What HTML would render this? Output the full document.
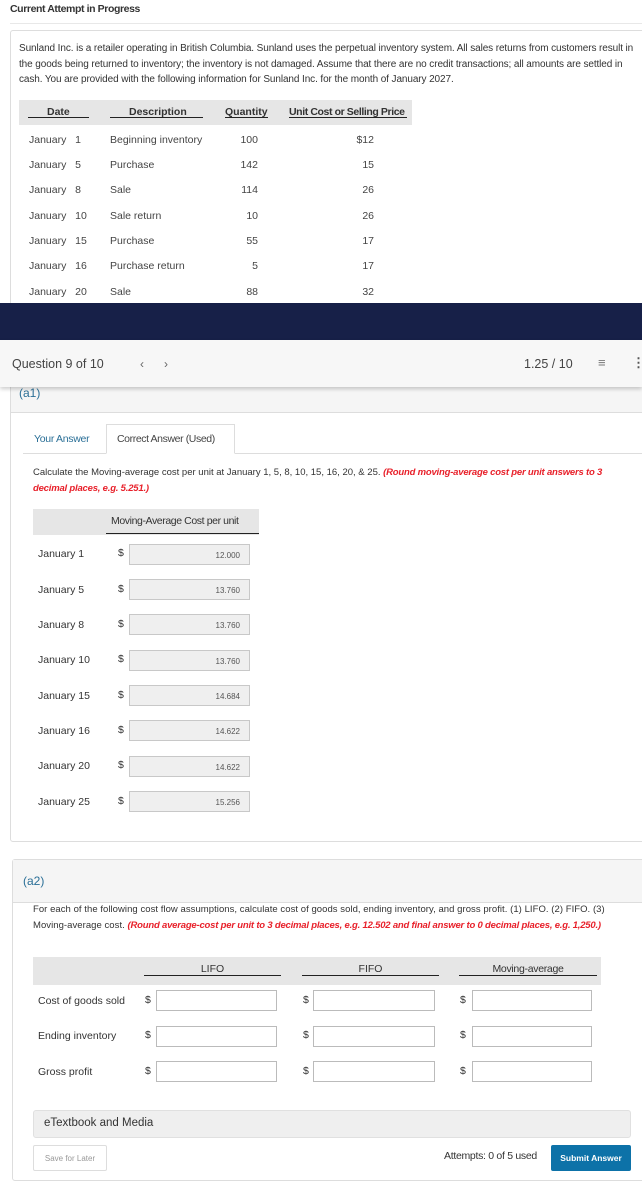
<!DOCTYPE html>
<html><head><meta charset="utf-8"><style>
*{margin:0;padding:0;box-sizing:border-box}
body{width:642px;height:1183px;position:relative;background:#fff;font-family:"Liberation Sans",sans-serif;color:#333;overflow:hidden;font-size:10.5px}
.a{position:absolute;white-space:nowrap}
.card{position:absolute;border:1px solid #ddd;border-radius:3px;background:#fff}
.hd{position:absolute;background:#e6e6e6}
.ul{position:absolute;border-bottom:1.5px solid #222}
.inp{position:absolute;height:21px;border:1px solid #c8c8c8;background:#efefef;font-size:8px;color:#555;text-align:right;padding:6px 9px 0 0}
.inw{position:absolute;height:21px;border:1px solid #bbb;background:#fff}
.red{color:#e8202a;font-style:italic;font-weight:bold;letter-spacing:-0.2px}
</style></head><body>
<div class="a" style="left:10px;top:3px;font-size:10.5px;font-weight:bold;letter-spacing:-0.4px;color:#333">Current Attempt in Progress</div>
<div class="a" style="left:10px;top:23px;width:632px;border-top:1px solid #e8e8e8"></div>
<div class="card" style="left:10px;top:30px;width:640px;height:300px"></div>
<div class="a" style="left:19px;top:41px;font-size:10px;line-height:15.5px;letter-spacing:-0.1px;white-space:normal;width:622px">Sunland Inc. is a retailer operating in British Columbia. Sunland uses the perpetual inventory system. All sales returns from customers result in the goods being returned to inventory; the inventory is not damaged. Assume that there are no credit transactions; all amounts are settled in cash. You are provided with the following information for Sunland Inc. for the month of January 2027.</div>
<div class="hd" style="left:19px;top:100px;width:393px;height:25px"></div>
<div class="a" style="left:47px;top:106px;font-size:10.5px;font-weight:bold;color:#333">Date</div>
<div class="ul" style="left:28px;top:117px;width:61px"></div>
<div class="a" style="left:129px;top:106px;font-size:10.5px;font-weight:bold">Description</div>
<div class="ul" style="left:110px;top:117px;width:93px"></div>
<div class="a" style="left:225px;top:106px;font-size:10.5px;font-weight:bold">Quantity</div>
<div class="ul" style="left:225px;top:117px;width:43px"></div>
<div class="a" style="left:289px;top:106px;font-size:10.5px;font-weight:bold;letter-spacing:-0.4px">Unit Cost or Selling Price</div>
<div class="ul" style="left:289px;top:117px;width:118px"></div>
<div style="position:absolute;left:0;top:134px;font-size:10.5px;color:#444">
<div class="a" style="top:0;left:29px">January&nbsp;&nbsp;&nbsp;1</div><div class="a" style="top:0;left:110px">Beginning inventory</div><div class="a" style="top:0;left:222px;width:36px;text-align:right">100</div><div class="a" style="top:0;left:330px;width:44px;text-align:right">$12</div>
<div class="a" style="top:25px;left:29px">January&nbsp;&nbsp;&nbsp;5</div><div class="a" style="top:25px;left:110px">Purchase</div><div class="a" style="top:25px;left:222px;width:36px;text-align:right">142</div><div class="a" style="top:25px;left:330px;width:44px;text-align:right">15</div>
<div class="a" style="top:50px;left:29px">January&nbsp;&nbsp;&nbsp;8</div><div class="a" style="top:50px;left:110px">Sale</div><div class="a" style="top:50px;left:222px;width:36px;text-align:right">114</div><div class="a" style="top:50px;left:330px;width:44px;text-align:right">26</div>
<div class="a" style="top:76px;left:29px">January&nbsp;&nbsp;&nbsp;10</div><div class="a" style="top:76px;left:110px">Sale return</div><div class="a" style="top:76px;left:222px;width:36px;text-align:right">10</div><div class="a" style="top:76px;left:330px;width:44px;text-align:right">26</div>
<div class="a" style="top:101px;left:29px">January&nbsp;&nbsp;&nbsp;15</div><div class="a" style="top:101px;left:110px">Purchase</div><div class="a" style="top:101px;left:222px;width:36px;text-align:right">55</div><div class="a" style="top:101px;left:330px;width:44px;text-align:right">17</div>
<div class="a" style="top:126px;left:29px">January&nbsp;&nbsp;&nbsp;16</div><div class="a" style="top:126px;left:110px">Purchase return</div><div class="a" style="top:126px;left:222px;width:36px;text-align:right">5</div><div class="a" style="top:126px;left:330px;width:44px;text-align:right">17</div>
<div class="a" style="top:152px;left:29px">January&nbsp;&nbsp;&nbsp;20</div><div class="a" style="top:152px;left:110px">Sale</div><div class="a" style="top:152px;left:222px;width:36px;text-align:right">88</div><div class="a" style="top:152px;left:330px;width:44px;text-align:right">32</div>
</div>
<div class="a" style="left:0;top:303px;width:642px;height:37px;background:#172048"></div>
<div class="card" style="left:10px;top:380px;width:640px;height:462px"></div>
<div class="a" style="left:11px;top:381px;width:640px;height:32px;background:#f5f5f5;border-bottom:1px solid #ddd"></div>
<div class="a" style="left:19px;top:386px;font-size:12px;color:#2a6f97">(a1)</div>
<div class="a" style="left:0;top:340px;width:642px;height:47px;background:#f7f7f7;box-shadow:0 2px 4px rgba(0,0,0,.2)"></div>
<div class="a" style="left:12px;top:357px;font-size:12.5px;color:#444">Question 9 of 10</div>
<div class="a" style="left:140px;top:357px;font-size:12px;color:#666">&lsaquo;&nbsp;&nbsp;&nbsp;&nbsp;&nbsp;&nbsp;&rsaquo;</div>
<div class="a" style="left:524px;top:357px;font-size:12.5px;color:#444">1.25 / 10</div>
<div class="a" style="left:598px;top:355px;font-size:13px;color:#777">&#8801;</div>
<div class="a" style="left:632px;top:355px;font-size:13px;font-weight:bold;color:#555">&#8942;</div>
<div class="a" style="left:23px;top:453px;width:619px;border-top:1px solid #ddd"></div>
<div class="a" style="left:34px;top:433px;font-size:10.5px;color:#2a6f97;letter-spacing:-0.3px">Your Answer</div>
<div class="a" style="left:106px;top:424px;width:129px;height:30px;border:1px solid #ddd;border-bottom:1px solid #fff;background:#fff"></div>
<div class="a" style="left:117px;top:433px;font-size:10.5px;color:#444;letter-spacing:-0.4px">Correct Answer (Used)</div>
<div class="a" style="left:33px;top:465px;font-size:9.5px;line-height:16px;letter-spacing:0;white-space:normal;width:600px">Calculate the Moving-average cost per unit at January 1, 5, 8, 10, 15, 16, 20, &amp; 25. <span class="red">(Round moving-average cost per unit answers to 3 decimal places, e.g. 5.251.)</span></div>
<div class="hd" style="left:33px;top:509px;width:226px;height:26px"></div>
<div class="a" style="left:111px;top:515px;font-size:10.5px;letter-spacing:-0.4px;color:#333">Moving-Average Cost per unit</div>
<div class="ul" style="left:106px;top:533px;width:153px"></div>
<div style="position:absolute;left:0;top:2px">
<div class="a" style="left:38px;top:546px">January 1</div><div class="a" style="left:118px;top:545px">$</div><div class="inp" style="left:129px;top:542px;width:121px">12.000</div>
<div class="a" style="left:38px;top:582px">January 5</div><div class="a" style="left:118px;top:581px">$</div><div class="inp" style="left:129px;top:577px;width:121px">13.760</div>
<div class="a" style="left:38px;top:617px">January 8</div><div class="a" style="left:118px;top:616px">$</div><div class="inp" style="left:129px;top:612px;width:121px">13.760</div>
<div class="a" style="left:38px;top:652px">January 10</div><div class="a" style="left:118px;top:651px">$</div><div class="inp" style="left:129px;top:648px;width:121px">13.760</div>
<div class="a" style="left:38px;top:688px">January 15</div><div class="a" style="left:118px;top:687px">$</div><div class="inp" style="left:129px;top:683px;width:121px">14.684</div>
<div class="a" style="left:38px;top:723px">January 16</div><div class="a" style="left:118px;top:722px">$</div><div class="inp" style="left:129px;top:718px;width:121px">14.622</div>
<div class="a" style="left:38px;top:758px">January 20</div><div class="a" style="left:118px;top:757px">$</div><div class="inp" style="left:129px;top:754px;width:121px">14.622</div>
<div class="a" style="left:38px;top:794px">January 25</div><div class="a" style="left:118px;top:793px">$</div><div class="inp" style="left:129px;top:789px;width:121px">15.256</div>
</div>
<div class="card" style="left:12px;top:859px;width:640px;height:322px"></div>
<div class="a" style="left:13px;top:860px;width:630px;height:43px;background:#f5f5f5;border-bottom:1px solid #ddd"></div>
<div class="a" style="left:23px;top:874px;font-size:12px;color:#2a6f97">(a2)</div>
<div class="a" style="left:33px;top:902px;font-size:9.5px;line-height:16px;letter-spacing:0.05px;white-space:normal;width:600px">For each of the following cost flow assumptions, calculate cost of goods sold, ending inventory, and gross profit. (1) LIFO. (2) FIFO. (3) Moving-average cost. <span class="red">(Round average-cost per unit to 3 decimal places, e.g. 12.502 and final answer to 0 decimal places, e.g. 1,250.)</span></div>
<div class="hd" style="left:33px;top:957px;width:568px;height:28px"></div>
<div class="a" style="left:144px;top:963px;width:137px;text-align:center;font-size:10.5px">LIFO</div><div class="ul" style="left:144px;top:975px;width:137px"></div>
<div class="a" style="left:302px;top:963px;width:137px;text-align:center;font-size:10.5px">FIFO</div><div class="ul" style="left:302px;top:975px;width:137px"></div>
<div class="a" style="left:459px;top:963px;width:138px;text-align:center;font-size:10.5px;letter-spacing:-0.3px">Moving-average</div><div class="ul" style="left:459px;top:975px;width:138px"></div>
<div class="a" style="left:38px;top:995px">Cost of goods sold</div>
<div class="a" style="left:38px;top:1030px">Ending inventory</div>
<div class="a" style="left:38px;top:1066px">Gross profit</div>
<div class="a" style="left:145px;top:994px">$</div><div class="inw" style="left:156px;top:990px;width:121px"></div>
<div class="a" style="left:303px;top:994px">$</div><div class="inw" style="left:313px;top:990px;width:122px"></div>
<div class="a" style="left:460px;top:994px">$</div><div class="inw" style="left:472px;top:990px;width:120px"></div>
<div class="a" style="left:145px;top:1029px">$</div><div class="inw" style="left:156px;top:1026px;width:121px"></div>
<div class="a" style="left:303px;top:1029px">$</div><div class="inw" style="left:313px;top:1026px;width:122px"></div>
<div class="a" style="left:460px;top:1029px">$</div><div class="inw" style="left:472px;top:1026px;width:120px"></div>
<div class="a" style="left:145px;top:1065px">$</div><div class="inw" style="left:156px;top:1061px;width:121px"></div>
<div class="a" style="left:303px;top:1065px">$</div><div class="inw" style="left:313px;top:1061px;width:122px"></div>
<div class="a" style="left:460px;top:1065px">$</div><div class="inw" style="left:472px;top:1061px;width:120px"></div>
<div class="a" style="left:33px;top:1110px;width:598px;height:28px;background:#efefef;border:1px solid #e0e0e0;border-radius:3px"></div>
<div class="a" style="left:44px;top:1117px;font-size:11.5px;color:#333">eTextbook and Media</div>
<div class="a" style="left:33px;top:1145px;width:74px;height:26px;border:1px solid #ddd;border-radius:2px;font-size:8px;color:#999;text-align:center;padding-top:8px">Save for Later</div>
<div class="a" style="left:444px;top:1150px;font-size:10.5px;color:#333;letter-spacing:-0.3px">Attempts: 0 of 5 used</div>
<div class="a" style="left:551px;top:1145px;width:80px;height:26px;background:#0d72a8;border-radius:2px;font-size:8.5px;font-weight:bold;color:#fff;text-align:center;padding-top:8px">Submit Answer</div>
</body></html>
